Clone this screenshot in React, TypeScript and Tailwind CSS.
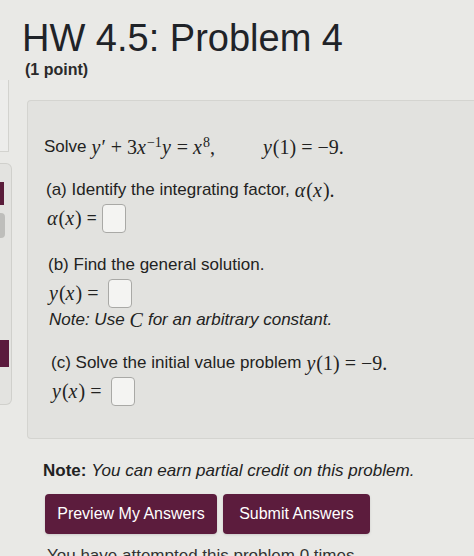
import React from "react";

const Op = ({ children }: { children: React.ReactNode }) => (
  <span className="mx-[5px]">{children}</span>
);

const V = ({ children }: { children: React.ReactNode }) => <i className="pr-[1px]">{children}</i>;

const AnswerBox = () => (
  <span className="ml-[5px] inline-block h-[29px] w-[24px] rounded-[4px] border border-[#a9a9a6] bg-[#f4f4f2] align-middle" />
);

const App = () => {
  return (
    <div className="flex h-[556px] w-[474px] overflow-hidden bg-[#e9e9e6] font-['Liberation_Sans',Arial,sans-serif] text-[#222]">
      {/* cut-off side nav */}
      <aside className="flex w-[12px] shrink-0 flex-col pt-[80px]">
        <div className="h-[72px] w-[9px] border-r border-b border-[#d3d3cf] bg-[#ededeb]" />
        <div className="mt-[11px] flex h-[242px] flex-col rounded-r-md border border-l-0 border-[#d0d0cc] bg-[#e3e3e0] pt-[18px]">
          <div className="h-[23px] w-[4px] bg-[#5a1d3a]" />
          <div className="mt-[8px] h-[25px] w-[5px] rounded-r-sm bg-[#bebebb]" />
          <div className="mt-[102px] h-[27px] w-[9px] bg-[#5b1a3d]" />
        </div>
      </aside>

      <main className="flex-1 pl-[10px]">
        <h1 className="pt-[16px] text-[38px] leading-[44px] text-[#1f2328]">HW 4.5: Problem 4</h1>
        <div className="pl-[3px] text-[16px] font-bold leading-[20px] text-[#2a2a2a]">(1 point)</div>

        <section className="mt-[20px] ml-[5px] rounded-l-[4px] border border-r-0 border-[#d4d4d0] bg-[#e2e2df] pt-[33px] pb-[32px] pl-[16px] text-[17px]">
          <div className="flex h-[26px] items-center">
            <span>Solve</span>
            <span className="ml-[5px] font-['Liberation_Serif',serif] text-[20px]">
              <V>y</V>′<Op>+</Op>3<V>x</V>
              <sup className="text-[14px]">−1</sup>
              <V>y</V>
              <Op>=</Op>
              <V>x</V>
              <sup className="text-[14px]">8</sup>,
            </span>
            <span className="ml-[48px] font-['Liberation_Serif',serif] text-[20px]">
              <V>y</V>(1)<Op>=</Op>−9.
            </span>
          </div>

          <div className="mt-[17px] flex h-[26px] items-center pl-[2px]">
            <span>(a) Identify the integrating factor,</span>
            <span className="ml-[5px] font-['Liberation_Serif',serif] text-[20px]">
              <V>α</V>(<V>x</V>).
            </span>
          </div>
          <div className="flex h-[30px] items-center pl-[3px]">
            <span className="font-['Liberation_Serif',serif] text-[20px]">
              <V>α</V>(<V>x</V>)
            </span>
            <span className="ml-[5px]">=</span>
            <AnswerBox />
          </div>

          <div className="mt-[19px] flex h-[26px] items-center pl-[4px]">(b) Find the general solution.</div>
          <div className="flex h-[30px] items-center pl-[5px]">
            <span className="font-['Liberation_Serif',serif] text-[20px]">
              <V>y</V>(<V>x</V>)<Op>=</Op>
            </span>
            <AnswerBox />
          </div>
          <div className="flex h-[24px] items-center pl-[5px] italic">
            Note: Use
            <span className="mx-[5px] font-['Liberation_Serif',serif] text-[20px]">C</span>
            for an arbitrary constant.
          </div>

          <div className="mt-[18px] flex h-[26px] items-center pl-[7px]">
            <span>(c) Solve the initial value problem</span>
            <span className="ml-[5px] font-['Liberation_Serif',serif] text-[20px]">
              <V>y</V>(1)<Op>=</Op>−9.
            </span>
          </div>
          <div className="flex h-[30px] items-center pl-[8px]">
            <span className="font-['Liberation_Serif',serif] text-[20px]">
              <V>y</V>(<V>x</V>)<Op>=</Op>
            </span>
            <AnswerBox />
          </div>
        </section>

        <p className="mt-[22px] pl-[21px] text-[17px] leading-[20px]">
          <b>Note:</b> <i>You can earn partial credit on this problem.</i>
        </p>

        <div className="mt-[13px] flex gap-[6px] pl-[23px]">
          <button className="h-[40px] w-[172px] rounded-[4px] bg-[#5c1c3d] text-[16px] font-medium text-white shadow-sm">
            Preview My Answers
          </button>
          <button className="h-[40px] w-[147px] rounded-[4px] bg-[#5c1c3d] text-[16px] font-medium text-white shadow-sm">
            Submit Answers
          </button>
        </div>

        <p className="mt-[12px] pl-[25px] text-[17px] leading-[20px] text-[#333]">
          You have attempted this problem 0 times.
        </p>
      </main>
    </div>
  );
};

export default App;
